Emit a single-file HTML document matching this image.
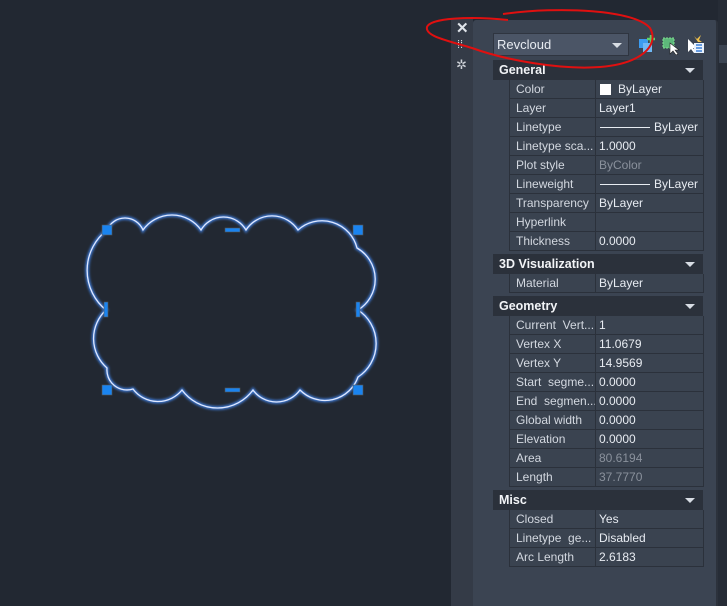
<!DOCTYPE html>
<html><head><meta charset="utf-8"><style>
body{margin:0;width:727px;height:606px;background:#222832;overflow:hidden;position:relative;font-family:"Liberation Sans",sans-serif;font-size:12px;color:#e8ecf2}
.a{position:absolute}
.hd{position:absolute;left:493px;width:210px;height:20px;background:#2b313b;font-weight:bold;font-size:12.5px;color:#f2f4f7;line-height:20px;text-indent:6px}
.hd:after{content:"";position:absolute;right:8px;top:8px;border-left:5px solid transparent;border-right:5px solid transparent;border-top:5px solid #d8dde4}
.r{position:absolute;left:509px;width:193px;height:18px;border:1px solid #2b313b;border-top:none;background:#3a4350;line-height:18px}
.r .l{position:absolute;left:6px;top:0;width:79px;white-space:nowrap;overflow:hidden;color:#d3d8e0}
.r .v{position:absolute;left:85px;top:0;bottom:0;border-left:1px solid #2b313b;padding-left:3px;width:104px;white-space:nowrap}
.g{color:#8a919c}
.ln{display:inline-block;width:50px;border-top:1px solid #e8ecf2;vertical-align:middle;margin-right:4px;margin-left:1px}
</style></head><body>
<div class="a" style="left:451px;top:18px;width:22px;height:588px;background:#343b47"></div>
<div class="a" style="left:473px;top:20px;width:243px;height:586px;background:#3b4452;border-radius:3px 3px 0 0;border-right:2px solid #2c323c"></div>
<div class="a" style="left:718px;top:0;width:9px;height:606px;background:#262c36"></div>
<div class="a" style="left:719px;top:45px;width:8px;height:18px;background:#3b4452"></div>
<div class="a" style="left:456px;top:19px;font-size:15px;color:#e0e4ea;font-weight:bold">✕</div>
<div class="a" style="left:457px;top:39px;font-size:11px;color:#d0d4da">⁞⁞</div>
<div class="a" style="left:456px;top:57px;font-size:13px;color:#d0d4da">✲</div>
<div class="a" style="left:493px;top:33px;width:136px;height:23px;background:#4b5566;border:1px solid #2f3540;box-sizing:border-box;line-height:21px;text-indent:3px;font-size:13px">Revcloud<span style="position:absolute;right:6px;top:9px;border-left:5px solid transparent;border-right:5px solid transparent;border-top:5px solid #d8dde4"></span></div>
<svg class="a" style="left:636px;top:33px" width="70" height="22">
<rect x="3" y="6" width="9" height="9" fill="#3c9cf0"/><rect x="7" y="10" width="9" height="9" fill="#6fb8f5"/><path d="M15 2v8M11 6h8" stroke="#5ed26a" stroke-width="2.5"/>
<rect x="27" y="5" width="11" height="10" fill="#5db77a" stroke="#7fe090" stroke-dasharray="2 1"/><path d="M34 10l0 11 3-3 3 4 2-1-3-4 4 0z" fill="#fff" stroke="#222" stroke-width=".6"/>
<path d="M52 6l0 13 3-3 3 4 2-1-3-4 4 0z" fill="#fff"/><path d="M58 3l3 3 4-4-2 5 3 2-4 0z" fill="#f4c34a"/><rect x="58" y="10" width="10" height="10" fill="#e9f1fb"/><path d="M60 12h6M60 15h6M60 18h6" stroke="#3c80d8" stroke-width="1.5"/>
</svg>
<div class="hd" style="top:60px">General</div>
<div class="r" style="top:80px"><span class="l">Color</span><span class="v"><span style="display:inline-block;width:11px;height:11px;background:#fff;vertical-align:-2px;margin-right:7px;margin-left:1px"></span>ByLayer</span></div>
<div class="r" style="top:99px"><span class="l">Layer</span><span class="v">Layer1</span></div>
<div class="r" style="top:118px"><span class="l">Linetype</span><span class="v"><span class="ln"></span>ByLayer</span></div>
<div class="r" style="top:137px"><span class="l">Linetype sca...</span><span class="v">1.0000</span></div>
<div class="r" style="top:156px"><span class="l">Plot style</span><span class="v g">ByColor</span></div>
<div class="r" style="top:175px"><span class="l">Lineweight</span><span class="v"><span class="ln"></span>ByLayer</span></div>
<div class="r" style="top:194px"><span class="l">Transparency</span><span class="v">ByLayer</span></div>
<div class="r" style="top:213px"><span class="l">Hyperlink</span><span class="v"></span></div>
<div class="r" style="top:232px"><span class="l">Thickness</span><span class="v">0.0000</span></div>
<div class="hd" style="top:254px">3D Visualization</div>
<div class="r" style="top:274px"><span class="l">Material</span><span class="v">ByLayer</span></div>
<div class="hd" style="top:296px">Geometry</div>
<div class="r" style="top:316px"><span class="l">Current &nbsp;Vert...</span><span class="v">1</span></div>
<div class="r" style="top:335px"><span class="l">Vertex X</span><span class="v">11.0679</span></div>
<div class="r" style="top:354px"><span class="l">Vertex Y</span><span class="v">14.9569</span></div>
<div class="r" style="top:373px"><span class="l">Start &nbsp;segme...</span><span class="v">0.0000</span></div>
<div class="r" style="top:392px"><span class="l">End &nbsp;segmen...</span><span class="v">0.0000</span></div>
<div class="r" style="top:411px"><span class="l">Global width</span><span class="v">0.0000</span></div>
<div class="r" style="top:430px"><span class="l">Elevation</span><span class="v">0.0000</span></div>
<div class="r" style="top:449px"><span class="l">Area</span><span class="v g">80.6194</span></div>
<div class="r" style="top:468px"><span class="l">Length</span><span class="v g">37.7770</span></div>
<div class="hd" style="top:490px">Misc</div>
<div class="r" style="top:510px"><span class="l">Closed</span><span class="v">Yes</span></div>
<div class="r" style="top:529px"><span class="l">Linetype &nbsp;ge...</span><span class="v">Disabled</span></div>
<div class="r" style="top:548px"><span class="l">Arc Length</span><span class="v">2.6183</span></div>
<svg class="a" style="left:0;top:0" width="727" height="606">
<defs><filter id="gl"><feGaussianBlur stdDeviation="1.2"/></filter></defs>
<g fill="none">
<path d="M107 230A19.5 19.5 0 0 1 143 230A35.5 35.5 0 0 1 201 230A26 26 0 0 1 246 230A31 31 0 0 1 298 230A36 36 0 0 1 357 248A36 36 0 0 1 358 310A40 40 0 0 1 358 377A35 35 0 0 1 300 390A29 29 0 0 1 253 390A44 44 0 0 1 182 390A31 31 0 0 1 133 389A20 20 0 0 1 107 368A39 39 0 0 1 106 310A51 51 0 0 1 107 230Z" stroke="#3f7fe0" stroke-width="3.5" filter="url(#gl)"/>
<path d="M107 230A19.5 19.5 0 0 1 143 230A35.5 35.5 0 0 1 201 230A26 26 0 0 1 246 230A31 31 0 0 1 298 230A36 36 0 0 1 357 248A36 36 0 0 1 358 310A40 40 0 0 1 358 377A35 35 0 0 1 300 390A29 29 0 0 1 253 390A44 44 0 0 1 182 390A31 31 0 0 1 133 389A20 20 0 0 1 107 368A39 39 0 0 1 106 310A51 51 0 0 1 107 230Z" stroke="#dfe8ff" stroke-width="1.3"/>
</g>
<g fill="#1a84f0" stroke="#555" stroke-width=".6">
<rect x="102" y="225" width="10" height="10"/><rect x="353" y="225" width="10" height="10"/><rect x="102" y="385" width="10" height="10"/><rect x="353" y="385" width="10" height="10"/>
<rect x="225" y="228" width="15" height="4"/><rect x="225" y="388" width="15" height="4"/><rect x="104" y="302" width="4" height="15"/><rect x="356" y="302" width="4" height="15"/>
</g>
<path d="M503 14C560 6 635 10 650 28C660 46 640 64 600 67C560 70 505 60 472 48C445 40 425 36 427 27C430 18 470 16 508 20" fill="none" stroke="#e01010" stroke-width="2"/>
</svg>
</body></html>
